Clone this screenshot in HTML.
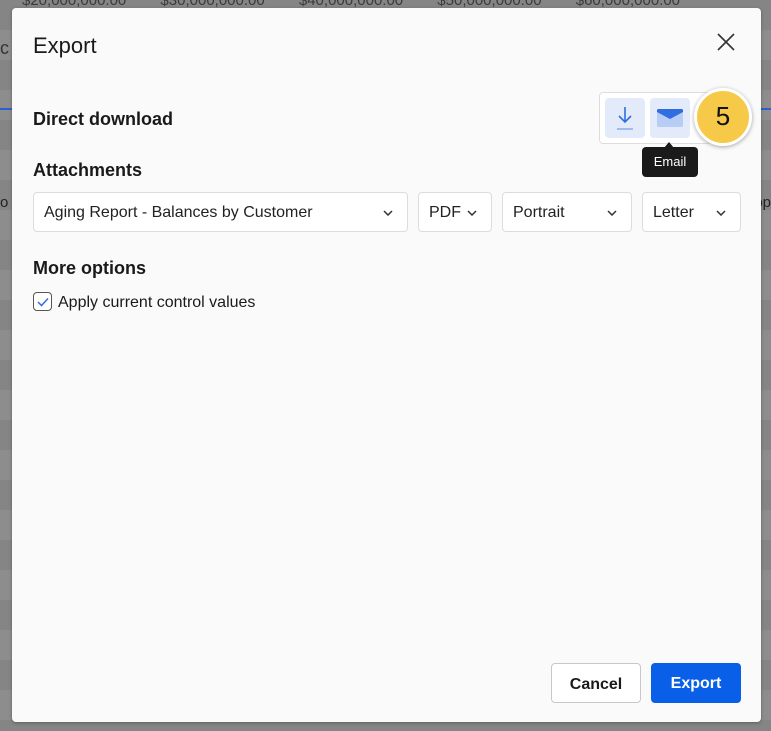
<!DOCTYPE html>
<html><head><meta charset="utf-8"><style>
*{box-sizing:border-box;margin:0;padding:0}
body{width:771px;height:731px;overflow:hidden;position:relative;font-family:"Liberation Sans",sans-serif;
background:repeating-linear-gradient(180deg,#858585 0 30px,#8d8d8d 30px 60px);}
.topnums{position:absolute;top:-8px;left:22px;font-size:15px;color:#3a3a3a;white-space:nowrap;word-spacing:30px}
.modal{position:absolute;left:12px;top:8px;width:749px;height:714px;background:#fafafa;border-radius:4px;box-shadow:0 1px 3px rgba(0,0,0,.3)}
.t{position:absolute;color:#1a1a1a}
h1{position:absolute;left:21px;top:25px;font-size:22px;font-weight:400;color:#1a1a1a}
.lbl{position:absolute;left:21px;font-size:18px;font-weight:700;color:#1a1a1a}
.sel{position:absolute;top:184px;height:40px;border:1px solid #dcdcdc;border-radius:4px;background:#fff;font-size:16px;color:#222;padding:11px 0 0 10px}
.sel svg{position:absolute;right:14px;top:17px}
.btn{position:absolute;top:655px;height:40px;border-radius:4px;font-size:16px;font-weight:700;text-align:center;line-height:41px}
</style></head><body>
<div class="topnums">$20,000,000.00 $30,000,000.00 $40,000,000.00 $50,000,000.00 $60,000,000.00</div>
<div style="position:absolute;left:0;top:38px;font-size:18px;color:#333">c</div>
<div style="position:absolute;left:0;top:194px;font-size:15px;color:#222">o</div>
<div style="position:absolute;right:0;top:194px;font-size:15px;color:#222">pp</div>
<div style="position:absolute;left:761px;top:108px;width:10px;height:2px;background:#2a5fd6"></div>
<div style="position:absolute;left:0;top:108px;width:12px;height:2px;background:#2a5fd6"></div>
<div class="modal">
<h1>Export</h1>
<svg style="position:absolute;left:705px;top:25px" width="18" height="18" viewBox="0 0 18 18"><path d="M1 1L17 17M17 1L1 17" stroke="#333" stroke-width="1.6"/></svg>
<div class="lbl" style="top:101px">Direct download</div>
<div style="position:absolute;left:587px;top:84px;width:112px;height:52px;border:1px solid #ddd;border-radius:4px;background:#fff"></div>
<div style="position:absolute;left:593px;top:90px;width:40px;height:40px;border-radius:4px;background:#e3ebfb"></div>
<svg style="position:absolute;left:603px;top:97px" width="20" height="26" viewBox="0 0 20 26"><path d="M10 2V17M4 11L10 17L16 11" stroke="#2f6de0" stroke-width="1.6" fill="none"/><path d="M2 24H18" stroke="#8fb0ee" stroke-width="1.6"/></svg>
<div style="position:absolute;left:638px;top:90px;width:40px;height:40px;border-radius:4px;background:#e3ebfb"></div>
<svg style="position:absolute;left:645px;top:101px" width="26" height="18" viewBox="0 0 26 18"><rect x="0" y="0" width="26" height="18" rx="1.5" fill="#b7cdf5"/><path d="M0 1.5Q0 0 1.5 0H24.5Q26 0 26 1.5V3L13 10L0 3Z" fill="#2f6de0"/></svg>
<div style="position:absolute;left:682px;top:80px;width:58px;height:58px;border-radius:50%;background:#f7c948;border:3px solid #fff;box-shadow:0 1px 4px rgba(0,0,0,.35);font-size:26px;text-align:center;line-height:50px;color:#111">5</div>
<div style="position:absolute;left:652px;top:134px;width:0;height:0;border-left:5px solid transparent;border-right:5px solid transparent;border-bottom:6px solid #1a1a1a"></div>
<div style="position:absolute;left:630px;top:139px;width:56px;height:30px;border-radius:4px;background:#1a1a1a;color:#fff;font-size:13px;text-align:center;line-height:30px">Email</div>
<div class="lbl" style="top:152px">Attachments</div>
<div class="sel" style="left:21px;width:375px">Aging Report - Balances by Customer<svg width="10" height="6" viewBox="0 0 10 6"><path d="M1 1L5 5L9 1" stroke="#333" stroke-width="1.5" fill="none"/></svg></div>
<div class="sel" style="left:406px;width:74px">PDF<svg width="10" height="6" viewBox="0 0 10 6"><path d="M1 1L5 5L9 1" stroke="#333" stroke-width="1.5" fill="none"/></svg></div>
<div class="sel" style="left:490px;width:130px">Portrait<svg width="10" height="6" viewBox="0 0 10 6"><path d="M1 1L5 5L9 1" stroke="#333" stroke-width="1.5" fill="none"/></svg></div>
<div class="sel" style="left:630px;width:99px">Letter<svg width="10" height="6" viewBox="0 0 10 6"><path d="M1 1L5 5L9 1" stroke="#333" stroke-width="1.5" fill="none"/></svg></div>
<div class="lbl" style="top:250px">More options</div>
<div style="position:absolute;left:21px;top:284px;width:19px;height:19px;border:1px solid #555;border-radius:4px;background:#fff"></div>
<svg style="position:absolute;left:25px;top:289px" width="12" height="10" viewBox="0 0 12 10"><path d="M1 5L4.5 8.5L11 1.5" stroke="#2f6de0" stroke-width="1.5" fill="none"/></svg>
<div class="t" style="left:46px;top:286px;font-size:16px">Apply current control values</div>
<div class="btn" style="left:539px;width:90px;border:1px solid #c8c8c8;background:#fff;color:#1a1a1a">Cancel</div>
<div class="btn" style="left:639px;width:90px;background:#0a5fe8;color:#fff">Export</div>
</div>
</body></html>
